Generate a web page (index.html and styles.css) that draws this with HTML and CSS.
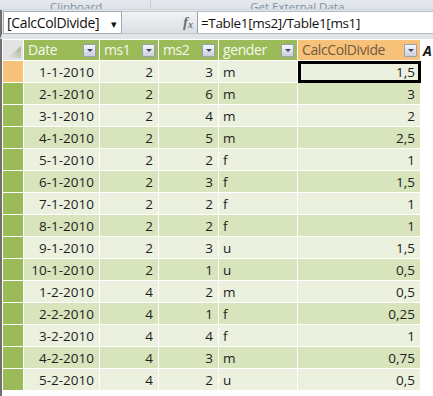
FILE: index.html
```html
<!DOCTYPE html>
<html lang="en">
<head>
    <meta charset="UTF-8" />
    <title>CalcColDivide</title>
    <link rel="stylesheet" href="styles.css">
</head>
<body>
    <div class="ribbon">
        <span class="group group-clipboard">Clipboard</span>
        <span class="group-sep"></span>
        <span class="group group-external">Get External Data</span>
    </div>
    <div class="formula-bar">
        <div class="name-box">
            <span>[CalcColDivide]</span>
            <span class="name-arrow">&#9662;</span>
        </div>
        <div class="fx-area"><span class="fx">f<sub>x</sub></span></div>
        <div class="formula">=Table1[ms2]/Table1[ms1]</div>
    </div>
    <div class="sheet">
        <table class="grid">
            <colgroup>
                <col class="c-rowhead">
                <col class="c-date">
                <col class="c-ms1">
                <col class="c-ms2">
                <col class="c-gender">
                <col class="c-calc">
                <col class="c-add">
            </colgroup>
            <thead>
                <tr>
                    <th class="corner">
                        <svg width="14" height="12" viewBox="0 0 14 12">
                            <defs>
                                <linearGradient id="tri" x1="0" y1="1" x2="1" y2="0">
                                    <stop offset="0" stop-color="#e6e8e0"/>
                                    <stop offset="1" stop-color="#a9b59a"/>
                                </linearGradient>
                            </defs>
                            <polygon points="0,12 14,0 14,12" fill="url(#tri)"/>
                        </svg>
                    </th>
                    <th><span>Date</span><i class="filter"></i></th>
                    <th><span>ms1</span><i class="filter"></i></th>
                    <th><span>ms2</span><i class="filter"></i></th>
                    <th><span>gender</span><i class="filter"></i></th>
                    <th class="calc-head"><span>CalcColDivide</span><i class="filter"></i></th>
                    <th class="add-head">A</th>
                </tr>
            </thead>
            <tbody>
                <tr class="current"><td class="rowhead"></td><td class="num">1-1-2010</td><td class="num">2</td><td class="num">3</td><td>m</td><td class="num selected">1,5</td><td class="blank"></td></tr>
                <tr><td class="rowhead"></td><td class="num">2-1-2010</td><td class="num">2</td><td class="num">6</td><td>m</td><td class="num">3</td><td class="blank"></td></tr>
                <tr><td class="rowhead"></td><td class="num">3-1-2010</td><td class="num">2</td><td class="num">4</td><td>m</td><td class="num">2</td><td class="blank"></td></tr>
                <tr><td class="rowhead"></td><td class="num">4-1-2010</td><td class="num">2</td><td class="num">5</td><td>m</td><td class="num">2,5</td><td class="blank"></td></tr>
                <tr><td class="rowhead"></td><td class="num">5-1-2010</td><td class="num">2</td><td class="num">2</td><td>f</td><td class="num">1</td><td class="blank"></td></tr>
                <tr><td class="rowhead"></td><td class="num">6-1-2010</td><td class="num">2</td><td class="num">3</td><td>f</td><td class="num">1,5</td><td class="blank"></td></tr>
                <tr><td class="rowhead"></td><td class="num">7-1-2010</td><td class="num">2</td><td class="num">2</td><td>f</td><td class="num">1</td><td class="blank"></td></tr>
                <tr><td class="rowhead"></td><td class="num">8-1-2010</td><td class="num">2</td><td class="num">2</td><td>f</td><td class="num">1</td><td class="blank"></td></tr>
                <tr><td class="rowhead"></td><td class="num">9-1-2010</td><td class="num">2</td><td class="num">3</td><td>u</td><td class="num">1,5</td><td class="blank"></td></tr>
                <tr><td class="rowhead"></td><td class="num">10-1-2010</td><td class="num">2</td><td class="num">1</td><td>u</td><td class="num">0,5</td><td class="blank"></td></tr>
                <tr><td class="rowhead"></td><td class="num">1-2-2010</td><td class="num">4</td><td class="num">2</td><td>m</td><td class="num">0,5</td><td class="blank"></td></tr>
                <tr><td class="rowhead"></td><td class="num">2-2-2010</td><td class="num">4</td><td class="num">1</td><td>f</td><td class="num">0,25</td><td class="blank"></td></tr>
                <tr><td class="rowhead"></td><td class="num">3-2-2010</td><td class="num">4</td><td class="num">4</td><td>f</td><td class="num">1</td><td class="blank"></td></tr>
                <tr><td class="rowhead"></td><td class="num">4-2-2010</td><td class="num">4</td><td class="num">3</td><td>m</td><td class="num">0,75</td><td class="blank"></td></tr>
                <tr><td class="rowhead"></td><td class="num">5-2-2010</td><td class="num">4</td><td class="num">2</td><td>u</td><td class="num">0,5</td><td class="blank"></td></tr>
            </tbody>
        </table>
    </div>
</body>
</html>
```

FILE: styles.css
```css
body {
    margin: 0;
    background: #fff;
    font-family: "Open Sans", "Noto Sans", sans-serif;
    color: #1e1e1e;
    overflow: hidden;
}

/* ribbon group labels, mostly cut off at the top */
.ribbon {
    height: 9px;
    overflow: hidden;
    background: linear-gradient(#e6eaee, #dde2e8);
    border-bottom: 1px solid #d0d5dc;
    display: flex;
    align-items: flex-end;
}

.group {
    font-size: 11.5px;
    line-height: 12px;
    color: #8390a0;
    margin-bottom: -4px;
}

.group-clipboard {
    margin-left: 50px;
}

.group-sep {
    width: 1px;
    height: 9px;
    background: #c8ced6;
    margin-left: 48px;
}

.group-external {
    margin-left: 99px;
}

.formula-bar {
    display: flex;
    height: 23px;
    padding: 1px 0 0 1px;
    background: #e4e8ec;
    border-bottom: 5px solid #e1e4e8;
    border-left: 2px solid #707070;
}

.name-box {
    width: 119px;
    background: #fff;
    border: 1px solid #a7abb0;
    display: flex;
    align-items: center;
    justify-content: space-between;
    padding: 0 4px 0 3px;
    box-sizing: border-box;
    font-size: 14px;
    letter-spacing: -0.35px;
    color: #111;
}

.name-arrow {
    font-size: 11px;
    color: #111;
    margin-top: 1px;
}

.fx-area {
    width: 76px;
    background: linear-gradient(#f1f3f5, #dadee3);
    border-top: 1px solid #c3c8ce;
    border-bottom: 1px solid #c3c8ce;
    border-right: 1px solid #9aa0a8;
    display: flex;
    align-items: center;
    justify-content: flex-end;
    padding-right: 4px;
    box-sizing: border-box;
}

.fx {
    font-family: "Liberation Serif", serif;
    font-style: italic;
    font-weight: 700;
    font-size: 15px;
    color: #6b6f75;
}

.fx sub {
    font-size: 10px;
    vertical-align: -1px;
}

.formula {
    flex: 1;
    background: #fff;
    border-top: 1px solid #b8bcc2;
    border-bottom: 1px solid #b8bcc2;
    display: flex;
    align-items: center;
    padding-left: 3px;
    font-size: 13.5px;
    letter-spacing: -0.35px;
    color: #111;
}

.sheet {
    border-left: 2px solid #707070;
    height: 400px;
}

.grid {
    border-collapse: collapse;
    table-layout: fixed;
    width: 458px;
    font-size: 13.5px;
}

.c-rowhead { width: 21px; }
.c-date { width: 76px; }
.c-ms1 { width: 59px; }
.c-ms2 { width: 60px; }
.c-gender { width: 79px; }
.c-calc { width: 123px; }
.c-add { width: 40px; }

.grid th, .grid td {
    border: 1px solid #fff;
    padding: 0 4px;
    white-space: nowrap;
    overflow: hidden;
}

.grid th {
    height: 20px;
    background: #9bbb59;
    color: #f4f8ec;
    font-weight: 400;
    font-size: 14px;
    letter-spacing: -0.4px;
    text-align: left;
    position: relative;
}

.grid th span {
    display: block;
    line-height: 20px;
}

.grid th.corner {
    background: #e1e3e5;
    padding: 0;
    text-align: right;
    vertical-align: bottom;
}

.corner svg {
    display: block;
    margin: 0 2px 2px auto;
}

.grid th.calc-head {
    background: #f8c17a;
    color: #705a3c;
}

.grid th.add-head {
    background: #fff;
    color: #1a1a1a;
    font-weight: 700;
    font-style: italic;
    padding-left: 2px;
}

.filter {
    position: absolute;
    right: 3px;
    top: 4px;
    width: 11px;
    height: 11px;
    border: 1px solid #97a0b0;
    border-radius: 1px;
    background: linear-gradient(#f4f6fa, #c9cfdb);
}

.filter::after {
    content: "";
    position: absolute;
    left: 3px;
    top: 4px;
    border-left: 3px solid transparent;
    border-right: 3px solid transparent;
    border-top: 3px solid #3c4462;
}

.grid td {
    height: 21px;
    line-height: 20px;
    background: #ebf1de;
}

.grid tbody tr:nth-child(even) td {
    background: #d8e4bc;
}

.grid td.num {
    text-align: right;
    padding-right: 5px;
}

.grid td.rowhead,
.grid tbody tr:nth-child(even) td.rowhead {
    background: #9bbb59;
    padding: 0;
}

.grid tr.current td.rowhead {
    background: #f8c17a;
}

.grid td.blank,
.grid tbody tr:nth-child(even) td.blank {
    background: #fff;
}

.grid td.selected {
    outline: 3px solid #000;
    outline-offset: -3px;
}
```
